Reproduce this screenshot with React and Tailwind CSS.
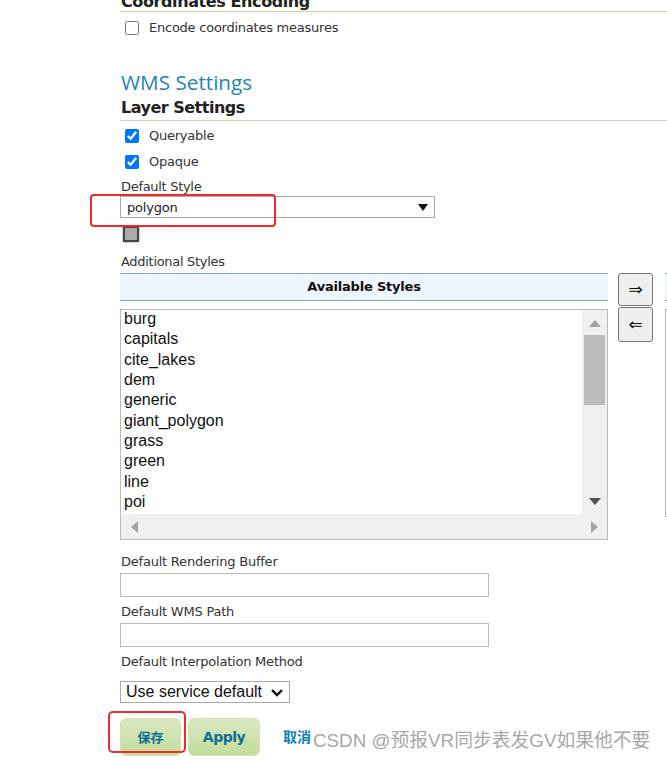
const SANS = "font-['DejaVu_Sans','Noto_Sans_CJK_SC',sans-serif]";
const styles = ["burg","capitals","cite_lakes","dem","generic","giant_polygon","grass","green","line","poi"];

function Tri({ dir, color }) {
  const pts = { up: "0,10 6,3 12,10", down: "0,2 6,9 12,2", left: "10,0 3,6 10,12", right: "2,0 9,6 2,12" }[dir];
  return <svg width="12" height="12" viewBox="0 0 12 12"><polygon points={pts} fill={color} /></svg>;
}

function Field({ label, top }) {
  return (
    <div className={top}>
      <div className="ml-px h-[18px] text-[13px] leading-[20px] tracking-[-0.22px] text-[#333]">{label}</div>
      <input className="mt-[3px] block h-6 w-[369px] border border-[#bbb] bg-white" />
    </div>
  );
}

export default function App() {
  return (
    <div className={`relative h-[760px] w-[667px] overflow-hidden bg-white pl-[120px] ${SANS}`}>
      <div className="mt-[-8px] h-5 w-[547px] border-b border-[#c9d8a4] pl-px text-[16px] leading-[19px] font-bold tracking-[-0.4px] text-[#222]">
        Coordinates Encoding
      </div>
      <label className="mt-[8px] flex h-4 items-center gap-[10px] pl-[5px] text-[#333]">
        <input type="checkbox" className="m-0 h-[14px] w-[14px]" />
        <span className="text-[13px] tracking-[-0.24px]">Encode coordinates measures</span>
      </label>
      <h2 className="mt-[33px] ml-px h-[26px] font-['Open_Sans',sans-serif] text-[20.7px] leading-[26px] font-normal text-[#1f84b8]">WMS Settings</h2>
      <h3 className="mt-[2px] h-[24px] w-[547px] border-b border-[#c9d8a4] pl-px text-[16px] leading-[22px] font-bold tracking-[-0.5px] text-[#222]">Layer Settings</h3>
      <label className="mt-[7px] flex h-4 items-center gap-[10px] pl-[5px] text-[#333]">
        <input type="checkbox" defaultChecked className="m-0 h-[14px] w-[14px]" />
        <span className="text-[13px] tracking-[-0.24px]">Queryable</span>
      </label>
      <label className="mt-[10px] flex h-4 items-center gap-[10px] pl-[5px] text-[#333]">
        <input type="checkbox" defaultChecked className="m-0 h-[14px] w-[14px]" />
        <span className="text-[13px] tracking-[-0.24px]">Opaque</span>
      </label>
      <div className="mt-[9px] ml-px h-[17px] text-[13px] leading-[16px] tracking-[-0.3px] text-[#333]">Default Style</div>
      <div className="flex h-[22px] w-[315px] items-center justify-between border border-[#aaa] bg-white pt-[2px] pr-[6px] pl-[6px] text-[#222]">
        <span className="text-[13px] tracking-[-0.2px]">polygon</span>
        <svg width="10" height="7" viewBox="0 0 10 7" className="-mt-[2px]"><polygon points="0,0 10,0 5,7" fill="#111" /></svg>
      </div>
      <div className="mt-[8px] ml-[3px] h-[16px] w-[16px] border-2 border-[#444] bg-[#aaa] shadow-[0_0_2px_#888]"></div>
      <div className="mt-[11px] ml-px h-[19px] text-[13px] leading-[18px] tracking-[-0.3px] text-[#333]">Additional Styles</div>

      <div className="mt-px flex">
        <div className="w-[488px] shrink-0">
          <div className="flex h-[28px] items-center justify-center border-y border-[#7fa6cf] bg-[#edf5fd] text-[13px] font-bold tracking-[-0.2px] text-[#111]">Available Styles</div>
          <div className="mt-[8px] flex h-[231px] border border-[#bbb] bg-white">
            <div className="flex min-w-0 flex-1 flex-col">
              <div className="flex flex-1 flex-col overflow-hidden pl-[3px] font-['Liberation_Sans',sans-serif] text-[16px] leading-[20.35px] text-[#111]">
                <div className="-mt-px">
                  {styles.map((s) => <div key={s}>{s}</div>)}
                </div>
              </div>
              <div className="flex h-[25px] items-center justify-between bg-[#f0f0f0] pl-[7px]">
                <Tri dir="left" color="#a3a3a3" />
                <span></span>
              </div>
            </div>
            <div className="flex w-[25px] flex-col bg-[#f0f0f0]">
              <div className="flex h-[25px] flex-col items-center justify-center"><Tri dir="up" color="#a3a3a3" /></div>
              <div className="mx-[2px] h-[70px] bg-[#bdbdbd]"></div>
              <div className="flex-1"></div>
              <div className="flex h-[25px] items-center justify-center"><Tri dir="down" color="#505050" /></div>
              <div className="flex h-[25px] items-center justify-center"><Tri dir="right" color="#a3a3a3" /></div>
            </div>
          </div>
        </div>
        <div className="ml-[10px] flex w-[35px] shrink-0 flex-col gap-px">
          <button className="flex h-[33px] items-center justify-center rounded-[3px] border border-[#767676] bg-[#efefef] text-[17px] text-[#111]">⇒</button>
          <button className="flex h-[35px] items-center justify-center rounded-[3px] border border-[#767676] bg-[#efefef] text-[17px] text-[#111]">⇐</button>
        </div>
        <div className="ml-[12px] w-[20px] shrink-0">
          <div className="h-[28px] border-y border-[#7fa6cf] bg-[#edf5fd]"></div>
          <div className="mt-[8px] h-[208px] border border-[#bbb] bg-white"></div>
        </div>
      </div>

      <Field label="Default Rendering Buffer" top="mt-[12px]" />
      <Field label="Default WMS Path" top="mt-[5px]" />
      <div className="mt-[5px] ml-px h-[18px] text-[13px] leading-[20px] tracking-[-0.22px] text-[#333]">Default Interpolation Method</div>
      <div className="mt-[11px] flex h-[22px] w-[170px] items-center justify-between border border-[#aaa] bg-white pr-[5px] pl-[5px] font-['Liberation_Sans',sans-serif] text-[16px] text-[#111]">
        <span>Use service default</span>
        <svg width="14" height="9" viewBox="0 0 14 9" fill="none" stroke="#111" strokeWidth="2.4"><path d="M2 2 7 7 12 2" /></svg>
      </div>
      <div className="mt-[15px] flex items-center">
        <button className="h-[38px] w-[61px] rounded-[6px] border border-[#d3e3b6] bg-gradient-to-b from-[#d9e8c2] to-[#c3dd9a] pt-[1px] text-[13px] font-bold text-[#0f6e96]">保存</button>
        <button className="ml-[7px] h-[38px] w-[72px] rounded-[6px] border border-[#d3e3b6] bg-gradient-to-b from-[#d9e8c2] to-[#c3dd9a] pt-[1px] text-[14px] font-bold tracking-[-0.5px] text-[#0f6e96]">Apply</button>
        <span className="ml-[23px] pt-[1px] text-[14px] font-bold text-[#0f7fb0]">取消</span>
      </div>

      <div className="absolute top-[194px] left-[90px] h-[33px] w-[186px] rounded-[4px] border-2 border-[#ef2b2b]"></div>
      <div className="absolute top-[711px] left-[108px] h-[42px] w-[78px] rounded-[5px] border-2 border-[#ef2b2b]"></div>
      <div className="absolute top-[728px] left-[313px] font-['Liberation_Sans','Noto_Sans_CJK_SC',sans-serif] text-[18.8px] leading-[26px] whitespace-nowrap text-[#a8a8a8]">CSDN @预报VR同步表发GV如果他不要</div>
    </div>
  );
}
